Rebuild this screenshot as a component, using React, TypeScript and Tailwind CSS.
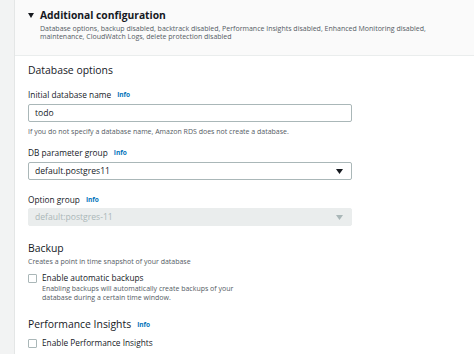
import React from "react";

function Info() {
  return <span className="ml-[6px] text-[6.5px] font-bold leading-[11px] text-[#0073bb]">Info</span>;
}

function Label({ children, className }: { children: React.ReactNode; className?: string }) {
  return (
    <div className={`flex items-center text-[8.3px] leading-[11px] text-[#16191f] ${className ?? ""}`}>
      {children}
      <Info />
    </div>
  );
}

function Caret({ disabled }: { disabled?: boolean }) {
  return (
    <svg width="7" height="5" viewBox="0 0 7 5">
      <path d="M0 0 L7 0 L3.5 5 Z" fill={disabled ? "#aab7b8" : "#16191f"} />
    </svg>
  );
}

function Checkbox({ className }: { className?: string }) {
  return (
    <span className={`h-[9px] w-[9px] shrink-0 rounded-[1px] border border-[#aab7b8] bg-white ${className ?? ""}`} />
  );
}

export default function App() {
  return (
    <div
      className="flex h-[354px] w-[474px] overflow-hidden bg-white"
      style={{ fontFamily: "'Open Sans', 'Noto Sans', sans-serif" }}
    >
      <div className="w-[15px] shrink-0 border-r border-[#e4e6e6] bg-[#f2f3f3]" />
      <div className="flex-1">
        <div className="h-[56px] border-b border-[#eaeded] bg-[#fafafa] pl-[13px] pt-[8px]">
          <div className="flex items-center gap-[6px]">
            <svg width="6" height="5" viewBox="0 0 6 5">
              <path d="M0 0 L6 0 L3 5 Z" fill="#16191f" />
            </svg>
            <span className="text-[10.3px] font-bold leading-[14px] text-[#16191f]">Additional configuration</span>
          </div>
          <div className="mt-[3px] pl-[12px] text-[7px] leading-[8px] text-[#545b64]">
            Database options, backup disabled, backtrack disabled, Performance Insights disabled, Enhanced Monitoring disabled,
            <br />
            maintenance, CloudWatch Logs, delete protection disabled
          </div>
        </div>

        <div className="pl-[13px] pr-[122px]">
          <div className="pt-[7px] text-[10.4px] leading-[14px] text-[#16191f]">Database options</div>

          <Label className="mt-[12px]">Initial database name</Label>
          <div className="mt-[4px] flex h-[18px] items-center rounded-[2px] border border-[#aab7b8] bg-white pl-[6px] text-[8.6px] text-[#16191f]">
            todo
          </div>
          <div className="mt-[5px] text-[7px] leading-[9px] text-[#545b64]">
            If you do not specify a database name, Amazon RDS does not create a database.
          </div>

          <Label className="mt-[11px]">DB parameter group</Label>
          <div className="mt-[4px] flex h-[18px] items-center justify-between rounded-[2px] border border-[#aab7b8] bg-white pl-[6px] pr-[8px] text-[8.6px] text-[#16191f]">
            default.postgres11
            <Caret />
          </div>

          <Label className="mt-[14px]">Option group</Label>
          <div className="mt-[3px] flex h-[18px] items-center justify-between rounded-[2px] border border-[#eaeded] bg-[#eaeded] pl-[6px] pr-[8px] text-[8.6px] text-[#aab7b8]">
            default:postgres-11
            <Caret disabled />
          </div>

          <div className="mt-[15px] text-[10.4px] leading-[14px] text-[#16191f]">Backup</div>
          <div className="mt-[2px] text-[7px] leading-[9px] text-[#545b64]">Creates a point in time snapshot of your database</div>
          <div className="mt-[6px] flex gap-[5px]">
            <Checkbox className="mt-[2px]" />
            <div>
              <div className="text-[8.3px] leading-[11px] text-[#16191f]">Enable automatic backups</div>
              <div className="mt-[2px] text-[7px] leading-[8.5px] text-[#545b64]">
                Enabling backups will automatically create backups of your
                <br />
                database during a certain time window.
              </div>
            </div>
          </div>

          <div className="mt-[15px] flex items-center">
            <span className="text-[10.4px] leading-[14px] text-[#16191f]">Performance Insights</span>
            <Info />
          </div>
          <div className="mt-[6px] flex gap-[5px]">
            <Checkbox className="mt-[1.5px]" />
            <div className="text-[8.3px] leading-[11px] text-[#16191f]">Enable Performance Insights</div>
          </div>
        </div>
      </div>
    </div>
  );
}
